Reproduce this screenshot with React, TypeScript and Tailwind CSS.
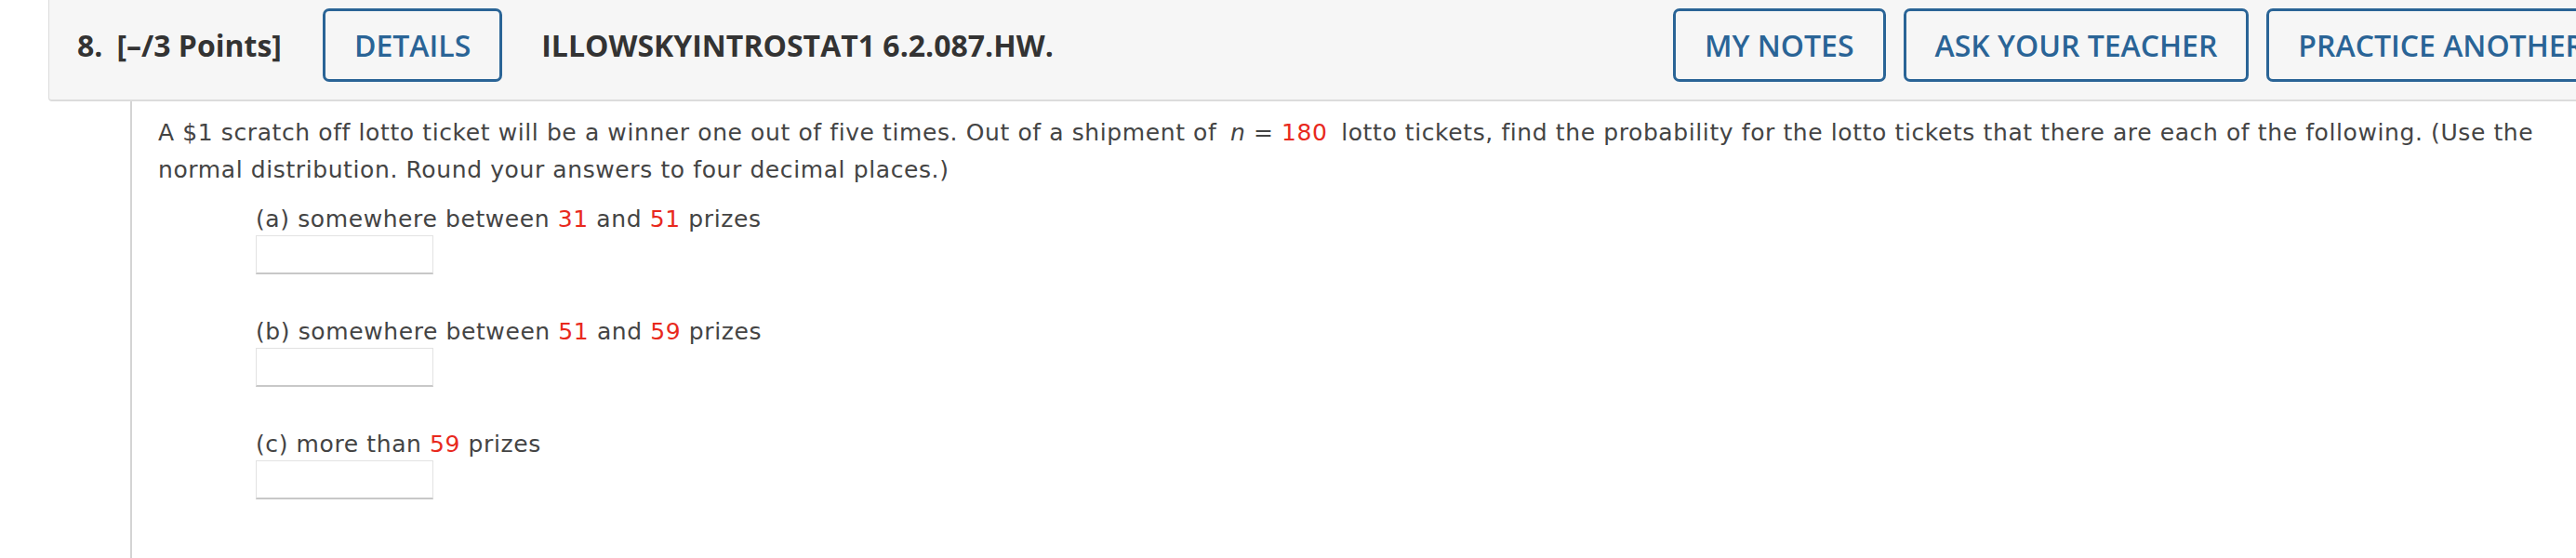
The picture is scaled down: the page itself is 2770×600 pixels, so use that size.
export default function App() {
    return (
        <div className="h-[600px] w-[2770px] overflow-hidden bg-white">
            <QuestionHeader />
            <QuestionBody />
        </div>
    );
}

function HeaderButton({ label }: { label: string }) {
    return (
        <div className="flex h-[79px] items-center rounded-[7px] border-[3px] border-[#2a6496] px-[31px] text-[32px] font-semibold whitespace-nowrap text-[#2a6496]">
            {label}
        </div>
    );
}

function QuestionHeader() {
    return (
        <div
            className="ml-[52px] box-border flex h-[109px] w-[2850px] items-center rounded-bl-[4px] border-b-2 border-l border-[#dcdcdc] bg-[#f6f6f6] pb-[10px] pl-[30px] text-[#333]"
            style={{ fontFamily: '"Open Sans", sans-serif' }}
        >
            <div className="flex w-[1716px] items-center">
                <span className="text-[32px] font-bold">8.</span>
                <span className="ml-[15px] text-[32px] font-bold">[–/3 Points]</span>
                <div className="ml-[44px]">
                    <HeaderButton label="DETAILS" />
                </div>
                <span className="ml-[42px] text-[32px] font-bold">ILLOWSKYINTROSTAT1 6.2.087.HW.</span>
            </div>
            <div className="flex gap-[19px]">
                <HeaderButton label="MY NOTES" />
                <HeaderButton label="ASK YOUR TEACHER" />
                <HeaderButton label="PRACTICE ANOTHER" />
            </div>
        </div>
    );
}

function Red({ children }: { children: React.ReactNode }) {
    return <span className="text-[#e8291d]">{children}</span>;
}

function AnswerPart({ label, last }: { label: React.ReactNode; last?: boolean }) {
    return (
        <div className={last ? "" : "mb-[45px]"}>
            <div className="h-[34px] leading-[34px]">{label}</div>
            <div className="box-border h-[42px] w-[191px] border border-b-2 border-[#e2e2e2] border-b-[#c8c8c8] bg-white" />
        </div>
    );
}

function QuestionBody() {
    return (
        <div
            className="ml-[140px] h-[491px] border-l-2 border-[#d4d4d4] pl-[28px] text-[25px] tracking-[0.6px] text-[#444]"
            style={{ fontFamily: '"DejaVu Sans", Verdana, sans-serif' }}
        >
            <p className="w-[2580px] pt-[14px] leading-[40px]">
                A $1 scratch off lotto ticket will be a winner one out of five times. Out of a shipment of{" "}
                <span className="ml-[6px] italic">n</span> = <Red>180</Red>
                <span className="ml-[6px]"> lotto tickets, find the probability for the lotto tickets that there are each of the following. (Use the normal distribution. Round your answers to four decimal places.)</span>
            </p>
            <div className="mt-[16px] pl-[105px]">
                <AnswerPart
                    label={
                        <>
                            (a) somewhere between <Red>31</Red> and <Red>51</Red> prizes
                        </>
                    }
                />
                <AnswerPart
                    label={
                        <>
                            (b) somewhere between <Red>51</Red> and <Red>59</Red> prizes
                        </>
                    }
                />
                <AnswerPart
                    last
                    label={
                        <>
                            (c) more than <Red>59</Red> prizes
                        </>
                    }
                />
            </div>
        </div>
    );
}
